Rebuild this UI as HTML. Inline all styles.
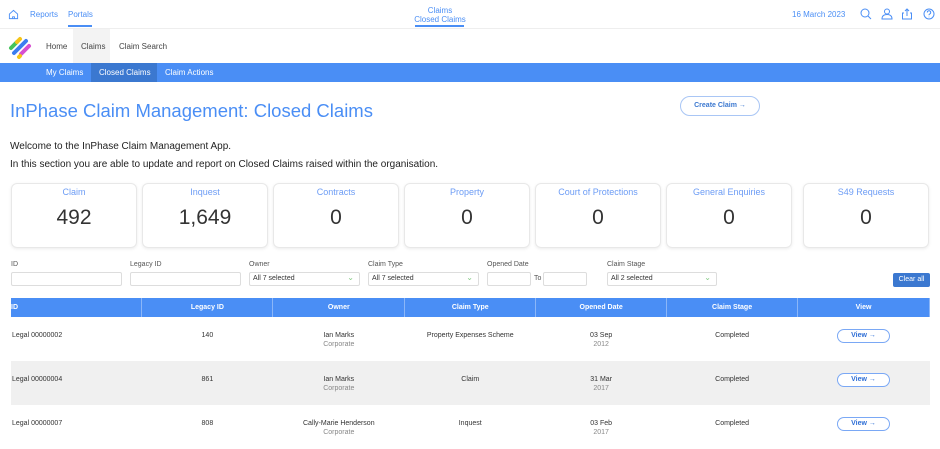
<!DOCTYPE html>
<html><head><meta charset="utf-8"><style>
*{box-sizing:border-box;margin:0;padding:0}
body{width:940px;height:448px;overflow:hidden;background:#fff;font-family:"Liberation Sans",sans-serif;color:#333;position:relative}
.abs{position:absolute}
.blue{color:#4a8ef5}
.card{position:absolute;top:183px;width:126px;height:65px;border:1px solid #e8e8e8;border-radius:6px;box-shadow:0 1px 3px rgba(0,0,0,.08);text-align:center}
.card .t{font-size:9px;color:#6c9cf5;margin-top:3px}
.card .n{font-size:21px;color:#333;margin-top:9px}
.lbl{position:absolute;top:261px;font-size:7px;color:#555}
.inp{position:absolute;top:272px;height:14px;border:1px solid #ddd;border-radius:2px;font-size:7px;padding:2px 3px;color:#333}
.inp .c{position:absolute;right:5px;top:0px;color:#8c8;font-size:8px}
table{position:absolute;left:11px;top:298px;width:919px;border-collapse:collapse;font-size:7px}
th{background:#4a8ef5;color:#fff;height:19px;font-weight:bold;border-right:1px solid #8bb6f8;text-align:center}
th:first-child{text-align:left}
td{height:44px;text-align:center;vertical-align:top;padding-top:14px;line-height:9px}
td:first-child{text-align:left;padding-left:1px}
tr.g td{background:#f0f0f0}
.s{color:#888}
.vb{display:inline-block;width:53px;height:14px;border:1px solid #7aa8f5;border-radius:8px;color:#2f6fd6;font-weight:bold;line-height:12px;margin-top:-2px}
</style></head><body>
<svg class="abs" style="left:8px;top:9px" width="11" height="11" viewBox="0 0 12 12"><path d="M1.5 5.5L6 1.5l4.5 4v5h-9z" fill="none" stroke="#4a8ef5" stroke-width="1"/><path d="M5 10.5v-2h2v2" fill="none" stroke="#4a8ef5"/></svg>
<div class="abs blue" style="left:30px;top:10px;font-size:8px">Reports</div>
<div class="abs blue" style="left:68px;top:10px;font-size:8px">Portals</div>
<div class="abs" style="left:68px;top:25px;width:24px;height:2px;background:#4a8ef5"></div>
<div class="abs blue" style="left:410px;top:6px;width:60px;text-align:center;font-size:8px;line-height:9px">Claims<br>Closed Claims</div>
<div class="abs" style="left:415px;top:25px;width:49px;height:2px;background:#4a8ef5"></div>
<div class="abs blue" style="left:792px;top:10px;font-size:8px">16 March 2023</div>
<svg class="abs" style="left:860px;top:8px" width="76" height="12" viewBox="0 0 76 12" fill="none" stroke="#4a8ef5" stroke-width="1"><circle cx="5" cy="5" r="4"/><path d="M8 8l3 3"/><circle cx="27" cy="3.5" r="2.5"/><path d="M22 11c0-3 2-4.5 5-4.5s5 1.5 5 4.5z"/><path d="M44 5h-1.5v6h9V5H50M47 8V1M45 3l2-2 2 2"/><circle cx="69" cy="6" r="5"/><path d="M67.3 4.5a1.7 1.7 0 1 1 2.2 1.6c-.5.2-.5.6-.5 1.2M69 8.7v.6"/></svg>
<div class="abs" style="left:0;top:28px;width:940px;height:1px;background:#eee"></div>
<svg class="abs" style="left:8px;top:35px" width="24" height="24" viewBox="0 0 24 24" stroke-linecap="round"><path d="M3 13l6-6" stroke="#44c45a" stroke-width="4"/><path d="M6 18L18 6" stroke="#3b7df0" stroke-width="4"/><path d="M9 7l3-3" stroke="#f5c518" stroke-width="4"/><path d="M13 19l8-8" stroke="#d64fd0" stroke-width="4"/><path d="M11 22l1-1" stroke="#f5c518" stroke-width="4"/></svg>
<div class="abs" style="left:73px;top:29px;width:37px;height:34px;background:#f3f3f3"></div>
<div class="abs" style="left:46px;top:42px;font-size:8px;color:#444">Home</div>
<div class="abs" style="left:81px;top:42px;font-size:8px;color:#444">Claims</div>
<div class="abs" style="left:119px;top:42px;font-size:8px;color:#444">Claim Search</div>
<div class="abs" style="left:0;top:63px;width:940px;height:19px;background:#4a8ef5"></div>
<div class="abs" style="left:91px;top:63px;width:66px;height:19px;background:#3b78d0"></div>
<div class="abs" style="left:46px;top:68px;font-size:8px;color:#fff">My Claims</div>
<div class="abs" style="left:99px;top:68px;font-size:8px;color:#fff">Closed Claims</div>
<div class="abs" style="left:165px;top:68px;font-size:8px;color:#fff">Claim Actions</div>
<div class="abs" style="left:10px;top:100px;font-size:18.5px;color:#4a8ef5">InPhase Claim Management: Closed Claims</div>
<div class="abs" style="left:680px;top:96px;width:80px;height:20px;border:1px solid #a9c6f5;border-radius:10px;font-size:7px;color:#3b78d0;font-weight:bold;text-align:center;line-height:18px">Create Claim →</div>
<div class="abs" style="left:10px;top:141px;font-size:10px;color:#222">Welcome to the InPhase Claim Management App.</div>
<div class="abs" style="left:10px;top:159px;font-size:10px;color:#222">In this section you are able to update and report on Closed Claims raised within the organisation.</div>
<div class="card" style="left:11px"><div class="t">Claim</div><div class="n">492</div></div>
<div class="card" style="left:142px"><div class="t">Inquest</div><div class="n">1,649</div></div>
<div class="card" style="left:273px"><div class="t">Contracts</div><div class="n">0</div></div>
<div class="card" style="left:404px"><div class="t">Property</div><div class="n">0</div></div>
<div class="card" style="left:535px"><div class="t">Court of Protections</div><div class="n">0</div></div>
<div class="card" style="left:666px"><div class="t">General Enquiries</div><div class="n">0</div></div>
<div class="card" style="left:803px"><div class="t">S49 Requests</div><div class="n">0</div></div>
<div class="lbl" style="left:11px">ID</div>
<div class="lbl" style="left:130px">Legacy ID</div>
<div class="lbl" style="left:249px">Owner</div>
<div class="lbl" style="left:368px">Claim Type</div>
<div class="lbl" style="left:487px">Opened Date</div>
<div class="lbl" style="left:607px">Claim Stage</div>
<div class="inp" style="left:11px;width:111px"></div>
<div class="inp" style="left:130px;width:111px"></div>
<div class="inp" style="left:249px;width:111px">All 7 selected<span class="c">⌄</span></div>
<div class="inp" style="left:368px;width:111px">All 7 selected<span class="c">⌄</span></div>
<div class="inp" style="left:487px;width:44px"></div>
<div class="abs" style="left:534px;top:275px;font-size:7px;color:#555">To</div>
<div class="inp" style="left:543px;width:44px"></div>
<div class="inp" style="left:607px;width:110px">All 2 selected<span class="c">⌄</span></div>
<div class="abs" style="left:893px;top:273px;width:37px;height:14px;background:#3b78d0;color:#fff;font-size:7px;text-align:center;line-height:14px;border-radius:2px">Clear all</div>
<table>
<colgroup><col style="width:131px"><col style="width:131px"><col style="width:132px"><col style="width:131px"><col style="width:131px"><col style="width:131px"><col style="width:132px"></colgroup>
<tr><th>ID</th><th>Legacy ID</th><th>Owner</th><th>Claim Type</th><th>Opened Date</th><th>Claim Stage</th><th>View</th></tr>
<tr><td>Legal 00000002</td><td>140</td><td>Ian Marks<br><span class="s">Corporate</span></td><td>Property Expenses Scheme</td><td>03 Sep<br><span class="s">2012</span></td><td>Completed</td><td><span class="vb">View →</span></td></tr>
<tr class="g"><td>Legal 00000004</td><td>861</td><td>Ian Marks<br><span class="s">Corporate</span></td><td>Claim</td><td>31 Mar<br><span class="s">2017</span></td><td>Completed</td><td><span class="vb" style="background:#fff">View →</span></td></tr>
<tr><td>Legal 00000007</td><td>808</td><td>Cally-Marie Henderson<br><span class="s">Corporate</span></td><td>Inquest</td><td>03 Feb<br><span class="s">2017</span></td><td>Completed</td><td><span class="vb">View →</span></td></tr>
</table>
</body></html>
